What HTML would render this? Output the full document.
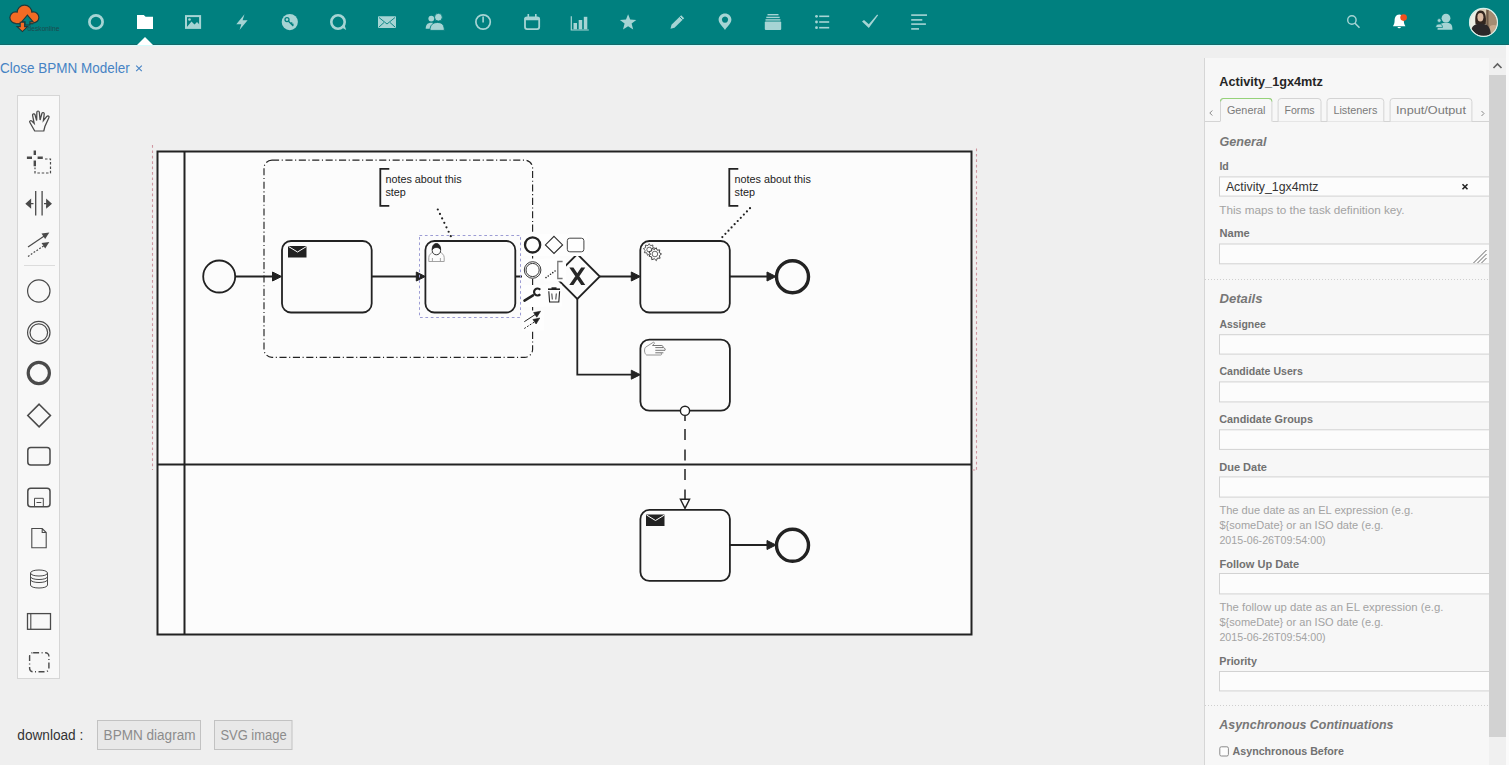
<!DOCTYPE html>
<html><head><meta charset="utf-8">
<style>
html,body{margin:0;padding:0;}
body{width:1509px;height:765px;overflow:hidden;position:relative;background:#efefef;font-family:"Liberation Sans",sans-serif;}
.abs{position:absolute;}
#hdr{left:0;top:0;width:1509px;height:44px;background:#00807f;border-bottom:1px solid #136a6b;box-shadow:0 1px 0 #d4fcfc;}
#close{left:0;top:59px;font-size:13.5px;color:#337ab7;white-space:nowrap;line-height:18px;}
#palette{left:17px;top:95px;width:41px;height:582px;background:#f8f8f8;border:1px solid #d6d6d6;}
#panel{left:1204px;top:58px;width:284px;height:707px;background:#f7f7f7;border-left:1px solid #d9d9d9;overflow:hidden;}
#sb{left:1489px;top:58px;width:17px;height:707px;background:#f0f0f0;}
#thumb{left:1489px;top:75px;width:17px;height:662px;background:#d2d2d2;}
.lbl{position:absolute;left:14px;font-size:11px;font-weight:bold;color:#666;white-space:nowrap;}
.inp{position:absolute;left:14px;width:290px;height:19px;background:#fcfcfc;border:1px solid #cfcfcf;}
.help{position:absolute;left:14px;font-size:10.5px;color:#999;white-space:nowrap;line-height:15px;}
.grp{position:absolute;left:14px;font-size:13px;font-weight:bold;font-style:italic;color:#777;white-space:nowrap;}
.tab{position:absolute;top:40px;height:22px;border:1px solid #d4d4d4;border-bottom:none;border-radius:3px 3px 0 0;background:#f7f7f7;font-size:11.5px;color:#777;line-height:22px;text-align:center;box-sizing:border-box;}
#dl{left:17px;top:726px;font-size:14px;color:#333;}
.btn{position:absolute;top:720px;height:29px;box-sizing:border-box;border:1px solid #c4c4c4;background:#e7e7e7;color:#8a8a8a;font-size:13.5px;line-height:27px;text-align:center;white-space:nowrap;}
</style></head>
<body>
<div id="hdr" class="abs"></div>
<svg class="abs" style="left:0;top:0" width="1509" height="45">
<g>
 <!-- logo -->
 <g fill="#1c3a3c"><circle cx="24.5" cy="12.6" r="8"/><circle cx="15.6" cy="17.6" r="6.3"/><circle cx="33.3" cy="17.4" r="6.1"/><rect x="15.6" y="14" width="17.7" height="10.3"/></g>
 <g fill="#f26b24"><circle cx="24.5" cy="12.6" r="6.8"/><circle cx="15.6" cy="17.6" r="5.1"/><circle cx="33.3" cy="17.4" r="4.9"/><rect x="15.6" y="14" width="17.7" height="9.1"/></g>
 <path d="M27.4 15.2 L21.6 21.9 H25 V25 H29.9 V21.9 H33.2 Z" fill="#00807f" stroke="#1c3a3c" stroke-width="1.1"/>
 <path d="M20.2 22.3 V26.6 H17 L22.4 31.6 L27.6 26.6 H24.6 V22.3 Z" fill="#f26b24" stroke="#1c3a3c" stroke-width="1.1"/>
 <text x="27.6" y="31.2" font-family="Liberation Sans" font-size="6.8" fill="#1d4a4e" textLength="31.8" lengthAdjust="spacingAndGlyphs">deskonline</text>
</g>
<g fill="#a6d4d4" stroke="none">
 <!-- circle -->
 <circle cx="96" cy="21.9" r="6.6" fill="none" stroke="#a6d4d4" stroke-width="2.7"/>
 <!-- folder (white) -->
 <path d="M137 15.1 H143.8 L145.6 16.8 H153 V28.9 H137 Z" fill="#fff"/>
 <path d="M137 45 L145 37 L153 45 Z" fill="#fff"/>
 <!-- image -->
 <rect x="186" y="16.1" width="14.1" height="11.8" fill="none" stroke="#a6d4d4" stroke-width="2"/>
 <circle cx="189.5" cy="19.5" r="1.3"/>
 <path d="M186.5 27.5 L191.5 21.5 L194.5 24.5 L197 22 L200 25 V27.5 Z"/>
 <!-- lightning -->
 <path d="M244.5 14.3 L236.3 24.2 H241.3 L239.5 30 L247.6 20.2 H242.6 Z"/>
 <!-- key circle -->
 <circle cx="289.8" cy="22.1" r="8.1"/>
 <g fill="none" stroke="#00807f" stroke-width="1.3"><circle cx="287" cy="19.6" r="2"/><path d="M288.5 21.2 L293.3 26 M291 23.7 L292.2 22.6 M292.2 24.9 L293.4 23.8"/></g>
 <!-- chat -->
 <circle cx="338" cy="22" r="6.7" fill="none" stroke="#a6d4d4" stroke-width="2.6"/>
 <path d="M341 27 L346.2 30 L344.5 25 Z"/>
 <!-- mail -->
 <rect x="378" y="16.3" width="18" height="11.6" rx="0.8"/>
 <path d="M379 17.5 L387 24 L395 17.5 M379 27 L384 22.5 M395 27 L390 22.5" fill="none" stroke="#00807f" stroke-width="0.9"/>
 <!-- users -->
 <circle cx="431.3" cy="18.6" r="2.9"/>
 <path d="M425.7 28.8 C425.7 24.8 427.6 22.8 431.3 22.8 C435 22.8 436.5 24.8 436.5 28.8 Z"/>
 <circle cx="438.4" cy="17.2" r="3.9" stroke="#00807f" stroke-width="0.9"/>
 <path d="M430 30.4 C430 25.2 432.6 22.5 437.5 22.5 C442.4 22.5 444.3 25.2 444.3 30.4 Z" stroke="#00807f" stroke-width="0.9"/>
 <!-- clock -->
 <circle cx="483.1" cy="22" r="7.2" fill="none" stroke="#a6d4d4" stroke-width="1.7"/>
 <rect x="482.3" y="16.5" width="1.6" height="6"/>
 <!-- calendar -->
 <rect x="525" y="17.3" width="14.2" height="11.8" rx="2" fill="none" stroke="#a6d4d4" stroke-width="1.8"/>
 <rect x="524.5" y="17" width="15.2" height="3.2" rx="1.5"/>
 <rect x="527.5" y="14" width="1.6" height="4.5"/>
 <rect x="535" y="14" width="1.6" height="4.5"/>
 <!-- chart -->
 <path d="M571.3 16.3 V30 H588.8" fill="none" stroke="#a6d4d4" stroke-width="1.2"/>
 <rect x="573.5" y="23" width="3.5" height="6.3"/>
 <rect x="578.7" y="20" width="3.5" height="9.3"/>
 <rect x="583.8" y="16.8" width="3.5" height="12.5"/>
 <!-- star -->
 <path d="M628.1 14.3 L630.2 19.6 L636.3 19.9 L631.6 23.6 L633.2 29.6 L628.1 26.3 L623 29.6 L624.6 23.6 L619.9 19.9 L626 19.6 Z"/>
 <!-- pencil -->
 <path d="M681.2 15.2 L684.2 18.2 L674.5 27.8 L670.5 28.7 L671.5 24.8 Z"/>
 <path d="M679.8 16.8 L682.7 19.7" stroke="#00807f" stroke-width="0.9"/>
 <!-- pin -->
 <path d="M725 13.4 C721.5 13.4 718.6 16 718.6 19.6 C718.6 23.5 722.5 26.5 725 30 C727.5 26.5 731.4 23.5 731.4 19.6 C731.4 16 728.5 13.4 725 13.4 Z M725 16.5 A3.1 3.1 0 1 0 725.01 16.5 Z" fill-rule="evenodd"/>
 <!-- stack -->
 <rect x="767.5" y="14" width="11" height="1.4"/>
 <rect x="766.3" y="16.7" width="13.4" height="1.4"/>
 <rect x="765.5" y="19.2" width="15" height="1.4"/>
 <rect x="764.8" y="21.5" width="16.4" height="8.5" rx="1"/>
 <!-- list -->
 <circle cx="816.5" cy="16.3" r="1.4"/><circle cx="816.5" cy="22" r="1.4"/><circle cx="816.5" cy="27.7" r="1.4"/>
 <rect x="819.2" y="15.5" width="10" height="1.6"/><rect x="819.2" y="21.2" width="10" height="1.6"/><rect x="819.2" y="26.9" width="10" height="1.6"/>
 <!-- check -->
 <path d="M862 21.4 L864 20 L868.8 24.3 L877.2 14.5 L878.1 15.3 L868.8 27.9 Z"/>
 <!-- lines -->
 <rect x="911.2" y="14.3" width="15.8" height="1.6"/>
 <rect x="911.2" y="19.1" width="11.1" height="1.6"/>
 <rect x="911.2" y="23.3" width="14.7" height="1.6"/>
 <rect x="911.2" y="28.1" width="7.8" height="1.6"/>
 <!-- search -->
 <circle cx="1351.9" cy="20" r="4.2" fill="none" stroke="#a6d4d4" stroke-width="1.4"/>
 <path d="M1354.8 23 L1359.5 27.7" stroke="#a6d4d4" stroke-width="1.6"/>
 <!-- bell -->
 <path d="M1399.2 14.5 C1395.8 14.5 1394.6 17.5 1394.6 21 C1394.6 24 1393.2 25.5 1393 26.2 H1405.4 C1405.2 25.5 1403.8 24 1403.8 21 C1403.8 17.5 1402.6 14.5 1399.2 14.5 Z M1397.4 27 A1.9 1.9 0 0 0 1401 27 Z" fill="#fff"/>
 <circle cx="1403.6" cy="17.6" r="3.3" fill="#f0501e"/>
 <!-- user -->
 <circle cx="1446" cy="18.2" r="4.4"/>
 <path d="M1437.5 29.8 C1437.5 24.8 1440.5 22.8 1446 22.8 C1451.5 22.8 1452.4 25 1452.4 29.8 Z"/>
 <circle cx="1439.2" cy="20.5" r="1.9" stroke="#00807f" stroke-width="0.7"/>
 <path d="M1435.7 27.5 C1435.7 25 1437 24 1439.2 24 C1441.4 24 1442.5 25 1442.5 27.5 Z" stroke="#00807f" stroke-width="0.7"/>
 <!-- avatar -->
 <circle cx="1483.5" cy="22.5" r="14.3" fill="#efe9de"/>
 <clipPath id="av"><circle cx="1483.5" cy="22.5" r="13.5"/></clipPath>
 <g clip-path="url(#av)">
  <rect x="1469" y="8" width="30" height="30" fill="#d9cdb6"/>
  <rect x="1469" y="8" width="10" height="30" fill="#eceee4"/>
  <rect x="1486" y="8" width="13" height="30" fill="#a48c72"/>
  <rect x="1486.5" y="8" width="2" height="20" fill="#6f5a48"/>
  <path d="M1490 26 C1493 24 1497 25 1498 27 V38 H1489 Z" fill="#c7aa8e"/>
  <path d="M1475.5 24 C1474.5 16 1476 10.5 1480.5 10.5 C1485 10.5 1486.5 15 1485.8 24 Z" fill="#33261f"/>
  <ellipse cx="1480.4" cy="17.3" rx="3" ry="4.2" fill="#dcbca4"/>
  <path d="M1470 38 C1470 28 1473 23.5 1480.5 23.5 C1488 23.5 1491 27 1491 38 Z" fill="#2b2729"/>
 </g>
 <circle cx="1483.5" cy="22.4" r="14" fill="none" stroke="#d6efea" stroke-width="1.1"/>
</g>
</svg>
<svg class="abs" style="left:0;top:50px" width="160" height="30"><text x="0" y="22.9" font-family="Liberation Sans" font-size="13.8" fill="#4683c4" textLength="129.7" lengthAdjust="spacingAndGlyphs">Close BPMN Modeler</text><path d="M136.2 15.6 L141.8 21.2 M141.8 15.6 L136.2 21.2" stroke="#4683c4" stroke-width="1.1"/></svg>
<div id="palette" class="abs"></div>
<svg class="abs" style="left:0;top:0" width="70" height="700">
<g fill="none" stroke="#4a4a4a" stroke-width="1.2">
 <!-- hand -->
 <path transform="translate(39,121) scale(1.07,1) translate(-37.5,-121)" d="M33.5 131 L29 122.5 C28.2 121.2 29.6 120 30.8 121 L33 123.3 L31.5 115.3 C31.2 113.8 33.3 113.3 33.8 114.8 L35.3 120.6 L35.5 112.2 C35.5 110.6 37.7 110.6 37.8 112.2 L38.5 120 L40.2 113.5 C40.6 112 42.6 112.3 42.4 113.9 L41.6 120.6 L44.8 116.5 C45.8 115.3 47.4 116.3 46.8 117.6 L43 126.5 L42 131 Z"/>
 <!-- lasso -->
 <path d="M34.8 150.5 V155 M34.8 160.5 V166.3 M26.9 157.8 H32 M37.6 157.8 H42.8" stroke-width="2.4"/>
 <path d="M45 159 H50.5 V173 H35 V167.5" stroke-width="1.2" stroke-dasharray="2.5,1.8"/>
 <!-- space -->
 <path d="M35.7 191 V215.6 M42.1 191 V215.6" stroke-width="1.3"/>
 <path d="M26.3 203.7 L30.5 200 V207.4 Z M51 203.7 L46.8 200 V207.4 Z M30 203.7 H33.5 M47.3 203.7 H44" fill="#4a4a4a" stroke-width="1.3"/>
 <!-- global connect -->
 <path d="M28 247 L45 235.5" stroke-width="1.2"/>
 <path d="M49.3 232.6 L41.5 233.5 L45.2 239 Z" fill="#4a4a4a" stroke="none"/>
 <path d="M28 256.4 L45 245" stroke-width="1.2" stroke-dasharray="1.8,1.6"/>
 <path d="M49.3 242 L41.5 242.9 L45.2 248.4 Z" fill="#4a4a4a" stroke="none"/>
 <path d="M24 265.5 H55" stroke="#dcdcdc" stroke-width="1"/>
 <!-- events -->
 <circle cx="38.8" cy="291" r="11.2" stroke-width="1.2"/>
 <circle cx="38.8" cy="332.6" r="11.2" stroke-width="1.2"/>
 <circle cx="38.8" cy="332.6" r="8.8" stroke-width="1.2"/>
 <circle cx="38.8" cy="373" r="10.6" stroke-width="3.2"/>
 <!-- gateway -->
 <path d="M39.1 404.2 L50.4 415.5 L39.1 426.8 L27.8 415.5 Z" stroke-width="1.6"/>
 <!-- task -->
 <rect x="27.8" y="447.6" width="22.2" height="17.5" rx="3" stroke-width="1.5"/>
 <!-- subprocess -->
 <rect x="27.8" y="488.3" width="22.2" height="18.4" rx="3" stroke-width="1.5"/>
 <path d="M34.5 506.7 V498.3 H43.3 V506.7 M36.5 502.5 H41.3" stroke-width="1"/>
 <!-- data object -->
 <path d="M31.8 528.5 H42.2 L46.2 532.5 V547.7 H31.8 Z M42.2 528.5 V532.5 H46.2" stroke-width="1.1"/>
 <!-- data store -->
 <path d="M30.5 573 V585 C30.5 589 47.5 589 47.5 585 V573 M30.5 573 C30.5 569 47.5 569 47.5 573 C47.5 577 30.5 577 30.5 573 M30.5 576.5 C30.5 580.5 47.5 580.5 47.5 576.5 M30.5 579.5 C30.5 583.5 47.5 583.5 47.5 579.5" stroke-width="1"/>
 <!-- participant -->
 <rect x="27.5" y="613.6" width="23" height="15.7" stroke-width="1.3"/>
 <path d="M30.8 613.6 V629.3" stroke-width="1.1"/>
 <!-- group -->
 <rect x="29.6" y="652.7" width="19.3" height="19.1" rx="3.5" stroke-width="1.4" stroke-dasharray="6,2.5,1,2.5"/>
</g>
</svg>
<svg class="abs" style="left:0;top:0" width="1509" height="765" id="canvas">
<g fill="none" stroke="#222" stroke-width="1.8">
 <rect x="157.5" y="151.5" width="814" height="483" fill="#fcfcfc" stroke-width="2"/>
 <line x1="184.5" y1="151.5" x2="184.5" y2="634.5" stroke-width="2"/>
 <line x1="157.5" y1="464.5" x2="971.5" y2="464.5" stroke-width="2"/>
 <path d="M152.5 145 V470 M976.5 148.5 V470 M972.5 470 H976.5" stroke="#cf96a0" stroke-width="1.1" stroke-dasharray="2.7,2.7"/>
 <rect x="264" y="160.1" width="268.6" height="197.2" rx="8" ry="8" stroke-width="1.15" stroke-dasharray="7.1,2.6,1.1,2.6"/>
 <circle cx="219.2" cy="276.5" r="16"/>
 <path d="M235 276.5 H274"/>
 <path d="M272.5 272 L281.5 276.5 L272.5 281 Z" fill="#222" stroke-width="1"/>
 <rect x="282" y="241" width="89.7" height="71.5" rx="9" ry="9"/>
 <path d="M371.7 276.5 H417"/>
 <path d="M416.3 272 L425.3 276.5 L416.3 281 Z" fill="#222" stroke-width="1"/>
 <rect x="425.4" y="241" width="89.9" height="71.5" rx="9" ry="9"/>
 <path d="M515.3 276.5 H555"/>
 <rect x="419.5" y="235.5" width="101" height="82" stroke="#9c9cd4" stroke-width="1" stroke-dasharray="2.7,2.7"/>
 <path d="M577.3 254 L599.8 276.5 L577.3 299 L554.8 276.5 Z"/>
 <path d="M569.3 267.6 H573.4 L585.3 284.9 H581.2 Z M581.2 267.6 H585.3 L573.4 284.9 H569.3 Z" fill="#262626" stroke="none"/>
 <path d="M599.8 276.5 H632"/>
 <path d="M631.3 272 L640.3 276.5 L631.3 281 Z" fill="#222" stroke-width="1"/>
 <rect x="640.3" y="241" width="89.5" height="71.5" rx="9" ry="9"/>
 <path d="M729.8 276.5 H768"/>
 <path d="M767 272 L776 276.5 L767 281 Z" fill="#222" stroke-width="1"/>
 <circle cx="792.5" cy="276.7" r="16" stroke-width="3.4"/>
 <path d="M577.3 299 V374.7 H632"/>
 <path d="M631.3 370.2 L640.3 374.7 L631.3 379.2 Z" fill="#222" stroke-width="1"/>
 <rect x="640.4" y="339.6" width="89.5" height="71.1" rx="9" ry="9"/>
 <path d="M685 415.5 V421 M685 429 V440 M685 449.4 V460.4 M685 469 V480 M685 489.4 V499.5" stroke-width="1.5"/>
 <circle cx="685" cy="410.8" r="4.6" fill="#fff" stroke-width="1.4"/>
 <path d="M680.4 499.2 L689.6 499.2 L685 508.4 Z" fill="#fff" stroke-width="1.4"/>
 <rect x="640.4" y="509.9" width="89.5" height="71" rx="9" ry="9"/>
 <path d="M729.9 545 H768"/>
 <path d="M767 540.5 L776 545 L767 549.5 Z" fill="#222" stroke-width="1"/>
 <circle cx="792.5" cy="545.3" r="16" stroke-width="3.4"/>
 <path d="M389.3 168.9 h-9 v37 h9" stroke-width="1.8"/>
 <path d="M738.3 168.8 h-9 v37 h9" stroke-width="1.8"/>
 <path d="M437.8 209.5 L451 236.6" stroke-width="2.2" stroke-dasharray="0,4.95" stroke-linecap="round"/>
 <path d="M750 208.2 L722.1 237.3" stroke-width="2.2" stroke-dasharray="0,4.44" stroke-linecap="round"/>
</g>
<g font-family="Liberation Sans" font-size="10.8" fill="#222">
 <text x="385.4" y="183.3">notes about this</text>
 <text x="385.4" y="195.8">step</text>
 <text x="734.6" y="182.6">notes about this</text>
 <text x="734.6" y="195.8">step</text>
</g>
<!-- task icons -->
<g>
 <path d="M288 246 h18.5 v11.5 h-18.5 z" fill="#222"/>
 <path d="M288.5 246.5 l9 5.5 l9 -5.5" fill="none" stroke="#fff" stroke-width="1"/>
 <path d="M646 514.5 h18.5 v11.5 h-18.5 z" fill="#222"/>
 <path d="M646.5 515 l9 5.5 l9 -5.5" fill="none" stroke="#fff" stroke-width="1"/>
</g>
<g fill="none" stroke="#222" stroke-width="0.9">
 <!-- user icon -->
 <path d="M428.8 261.5 v-4 c0-2.5 2-4.5 4.5-5.3 M444.2 261.5 v-4 c0-2.5 -2-4.5 -4.5-5.3 M428.8 261.5 h15.4" stroke="#999"/>
 <circle cx="436.4" cy="250.6" r="4.2" fill="#fcfcfc"/>
 <path d="M432.2 249.5 c0-4 2-6 4.2-6 c2.2 0 4.2 2 4.2 6 c-1-1.5 -2.5-2 -4.2-2 c-1.7 0 -3.2 0.5 -4.2 2 z" fill="#222"/>
 <path d="M432.4 261.5 v-3.5 M440.4 261.5 v-3.5" stroke="#999"/>
</g>
<g fill="none" stroke="#3a3a3a" stroke-width="0.75">
 <!-- gears -->
 <path d="M0,-5.5 L1.2,-3.6 L3.4,-4.3 L3.3,-2 L5.5,-1.2 L4,0.6 L5.1,2.6 L2.8,3 L2.4,5.3 L0.4,4.1 L-1.6,5.3 L-2.2,3 L-4.5,2.9 L-3.7,0.8 L-5.4,-0.9 L-3.3,-1.9 L-3.5,-4.2 L-1.2,-3.7 Z" transform="translate(649.2,249.6) scale(1.08)"/>
 <circle cx="649.2" cy="249.6" r="2.4"/>
 <path d="M0,-5.5 L1.2,-3.6 L3.4,-4.3 L3.3,-2 L5.5,-1.2 L4,0.6 L5.1,2.6 L2.8,3 L2.4,5.3 L0.4,4.1 L-1.6,5.3 L-2.2,3 L-4.5,2.9 L-3.7,0.8 L-5.4,-0.9 L-3.3,-1.9 L-3.5,-4.2 L-1.2,-3.7 Z" transform="translate(654.9,254) rotate(12) scale(1.17)" fill="#fcfcfc"/>
 <circle cx="654.9" cy="254" r="2.8"/>
</g>
<g fill="none" stroke-width="0.9">
 <!-- hand -->
 <path d="M652.5 345.5 L654.5 343.3 L653.7 342 L645.6 347.2 C644.1 348.4 644 353.6 646.6 355 H660.8 C661.9 355 661.9 353.2 660.8 353.2" stroke="#8a8a8a"/>
 <path d="M652.5 345.5 H661.8 C663 345.5 663.4 347.3 662.5 347.4 M655.3 347.6 H663.6 M655.3 350.3 H665 M655.3 352.8 H663.4 M663.6 347.6 C665 348 665.6 350 665 350.3" stroke="#666"/>
</g>
<!-- context pad -->
<g fill="#fefefe" stroke="none">
 <rect x="522" y="234" width="22" height="22"/>
 <rect x="543.5" y="234" width="22" height="22"/>
 <rect x="565" y="234" width="22" height="22"/>
 <rect x="522" y="259" width="22" height="20"/>
 <rect x="544" y="258.5" width="22" height="23"/>
 <rect x="522" y="285" width="22" height="22"/>
 <rect x="543.5" y="284.5" width="18.5" height="22"/>
 <rect x="522" y="310.5" width="22" height="20"/>
</g>
<g fill="none" stroke="#222">
 <circle cx="532.6" cy="244.9" r="7.6" stroke-width="2.3"/>
 <path d="M554 236.3 L562.6 244.9 L554 253.5 L545.4 244.9 Z" stroke-width="1.1" stroke="#2a2a2a"/>
 <rect x="567.3" y="238.2" width="16.6" height="13.6" rx="2.5" stroke-width="1" stroke="#444"/>
 <circle cx="532.6" cy="270" r="8.3" stroke-width="0.9"/>
 <circle cx="532.6" cy="270" r="6.6" stroke-width="0.9"/>
 <path d="M562.6 261.5 h-4.8 v17 h4.8" stroke-width="1.3" stroke="#777"/>
 <path d="M546 277.6 L557 269.6" stroke-width="1.6" stroke-dasharray="0,2.8" stroke-linecap="round"/>
 <path d="M524.5 300.6 L533 295.3" stroke-width="2.6" stroke-linecap="round"/>
 <path d="M540.2 289.7 A3.5 3.5 0 1 0 540.2 294.3" stroke-width="2.2"/>
 <path d="M548 289.2 h12" stroke-width="1.6"/>
 <path d="M551.5 288.3 h5" stroke-width="2"/>
 <path d="M548.8 291.2 L549.6 302 h9.2 L559.6 291.2" stroke-width="1.1"/>
 <path d="M551.8 293.5 L552.3 299.5 M556.3 293.5 L555.8 299.5" stroke-width="0.9"/>
 <path d="M524.3 321.7 L536 314" stroke-width="1"/>
 <path d="M540.6 311.2 L533.6 312.6 L536.8 317.2 Z" fill="#222" stroke-width="0.6"/>
 <path d="M524.3 328.5 L536 321" stroke-width="1" stroke-dasharray="1.8,1.5"/>
 <path d="M539.8 318 L532.9 319.5 L536.1 324 Z" fill="#222" stroke-width="0.6"/>
</g>
</svg>
<svg class="abs" style="left:0;top:0" width="1489" height="765" id="psvg">
<style>.pl{font:bold 10.6px "Liberation Sans";fill:#717171}.ph{font:10.9px "Liberation Sans";fill:#a3a3a3}.pg{font:italic bold 13px "Liberation Sans";fill:#777}.pt{font:bold 13.2px "Liberation Sans";fill:#262626}.pv{font:12px "Liberation Sans";fill:#333}.ptab{font:11px "Liberation Sans";fill:#7a7a7a}</style>
<rect x="1204" y="58" width="285" height="707" fill="#f7f7f7"/>
<path d="M1204.5 58 V765" stroke="#d6d6d6" stroke-width="1"/>
<text x="1219.3" y="85.7" class="pt" textLength="103.6" lengthAdjust="spacingAndGlyphs">Activity_1gx4mtz</text>
<path d="M1205 121.5 H1220 M1272.4 121.5 H1489" stroke="#d4d4d4" stroke-width="1"/>
<path d="M1220.5 121.5 V101.5 Q1220.5 98.5 1223.5 98.5 H1268.9 Q1271.9 98.5 1271.9 101.5 V121.5" fill="#f7f7f7" stroke="#d4d4d4" stroke-width="1"/>
<text x="1246.2" y="113.6" class="ptab" text-anchor="middle" textLength="38.5" lengthAdjust="spacingAndGlyphs">General</text>
<path d="M1278.1 121.5 V101.5 Q1278.1 98.5 1281.1 98.5 H1318.0 Q1321.0 98.5 1321.0 101.5 V121.5" fill="#f7f7f7" stroke="#d4d4d4" stroke-width="1"/>
<text x="1299.5" y="113.6" class="ptab" text-anchor="middle" textLength="30" lengthAdjust="spacingAndGlyphs">Forms</text>
<path d="M1327.0 121.5 V101.5 Q1327.0 98.5 1330.0 98.5 H1380.8 Q1383.8 98.5 1383.8 101.5 V121.5" fill="#f7f7f7" stroke="#d4d4d4" stroke-width="1"/>
<text x="1355.4" y="113.6" class="ptab" text-anchor="middle" textLength="44" lengthAdjust="spacingAndGlyphs">Listeners</text>
<path d="M1390.1 121.5 V101.5 Q1390.1 98.5 1393.1 98.5 H1468.9 Q1471.9 98.5 1471.9 101.5 V121.5" fill="#f7f7f7" stroke="#d4d4d4" stroke-width="1"/>
<text x="1431.0" y="113.6" class="ptab" text-anchor="middle" textLength="69.9" lengthAdjust="spacingAndGlyphs">Input/Output</text>
<path d="M1220.5 101.5 Q1220.5 98.5 1223.5 98.5 H1268.9 Q1271.9 98.5 1271.9 101.5" fill="none" stroke="#96d27a" stroke-width="1.1"/>
<path d="M1212.3 110.5 L1209.8 113 L1212.3 115.5" fill="none" stroke="#888" stroke-width="1"/>
<path d="M1481.5 111 L1484 113.5 L1481.5 116" fill="none" stroke="#888" stroke-width="1"/>
<text x="1219.5" y="145.6" class="pg" textLength="47" lengthAdjust="spacingAndGlyphs">General</text>
<text x="1219.4" y="169.7" class="pl">Id</text>
<rect x="1219.5" y="176.9" width="300" height="19.2" fill="#fcfcfc" stroke="#d2d2d2" stroke-width="1"/>
<text x="1225.9" y="190.5" class="pv" textLength="92.6" lengthAdjust="spacingAndGlyphs">Activity_1gx4mtz</text>
<path d="M1462.5 184.3 L1467.5 189.3 M1467.5 184.3 L1462.5 189.3" stroke="#222" stroke-width="1.6"/>
<text x="1219.3" y="214" class="ph" textLength="185.3" lengthAdjust="spacingAndGlyphs">This maps to the task definition key.</text>
<text x="1219.5" y="236.8" class="pl" textLength="30.3" lengthAdjust="spacingAndGlyphs">Name</text>
<rect x="1219.5" y="244.0" width="300" height="19.8" fill="#fcfcfc" stroke="#d2d2d2" stroke-width="1"/>
<path d="M1473.5 263 L1486.5 250 M1477.5 263 L1486.5 254 M1481.5 263 L1486.5 258" stroke="#555" stroke-width="0.9"/>
<path d="M1205 279.5 H1489" stroke="#cfcfcf" stroke-width="1" stroke-dasharray="1,2"/>
<text x="1219.5" y="302.7" class="pg" textLength="43" lengthAdjust="spacingAndGlyphs">Details</text>
<text x="1219.4" y="327.9" class="pl" textLength="46.5" lengthAdjust="spacingAndGlyphs">Assignee</text>
<rect x="1219.5" y="334.7" width="300" height="19.4" fill="#fcfcfc" stroke="#d2d2d2" stroke-width="1"/>
<text x="1219.4" y="374.7" class="pl" textLength="83.4" lengthAdjust="spacingAndGlyphs">Candidate Users</text>
<rect x="1219.5" y="381.9" width="300" height="20.0" fill="#fcfcfc" stroke="#d2d2d2" stroke-width="1"/>
<text x="1219.2" y="422.6" class="pl" textLength="93.8" lengthAdjust="spacingAndGlyphs">Candidate Groups</text>
<rect x="1219.5" y="429.8" width="300" height="19.6" fill="#fcfcfc" stroke="#d2d2d2" stroke-width="1"/>
<text x="1219.2" y="470.7" class="pl" textLength="47.8" lengthAdjust="spacingAndGlyphs">Due Date</text>
<rect x="1219.5" y="476.9" width="300" height="20.2" fill="#fcfcfc" stroke="#d2d2d2" stroke-width="1"/>
<text x="1219.4" y="514.1" class="ph" textLength="194" lengthAdjust="spacingAndGlyphs">The due date as an EL expression (e.g.</text>
<text x="1219.4" y="529.3" class="ph" textLength="164" lengthAdjust="spacingAndGlyphs">${someDate} or an ISO date (e.g.</text>
<text x="1219.4" y="543.8" class="ph" textLength="106.3" lengthAdjust="spacingAndGlyphs">2015-06-26T09:54:00)</text>
<text x="1219.4" y="567.8" class="pl" textLength="79.8" lengthAdjust="spacingAndGlyphs">Follow Up Date</text>
<rect x="1219.5" y="573.5" width="300" height="20.4" fill="#fcfcfc" stroke="#d2d2d2" stroke-width="1"/>
<text x="1219.4" y="611.2" class="ph" textLength="224" lengthAdjust="spacingAndGlyphs">The follow up date as an EL expression (e.g.</text>
<text x="1219.4" y="626.4" class="ph" textLength="164" lengthAdjust="spacingAndGlyphs">${someDate} or an ISO date (e.g.</text>
<text x="1219.4" y="640.9" class="ph" textLength="106.3" lengthAdjust="spacingAndGlyphs">2015-06-26T09:54:00)</text>
<text x="1219.3" y="665" class="pl" textLength="37.6" lengthAdjust="spacingAndGlyphs">Priority</text>
<rect x="1219.5" y="671.5" width="300" height="19.4" fill="#fcfcfc" stroke="#d2d2d2" stroke-width="1"/>
<path d="M1205 705.5 H1489" stroke="#cfcfcf" stroke-width="1" stroke-dasharray="1,2"/>
<text x="1219.3" y="729.4" class="pg" textLength="174.2" lengthAdjust="spacingAndGlyphs">Asynchronous Continuations</text>
<rect x="1219.8" y="746.8" width="8.6" height="9.2" rx="1.5" fill="#fdfdfd" stroke="#8a8a8a" stroke-width="1"/>
<text x="1232.6" y="754.8" class="pl" textLength="111.3" lengthAdjust="spacingAndGlyphs">Asynchronous Before</text>
</svg>
<div id="sb" class="abs"></div>
<div id="thumb" class="abs"></div>
<div class="abs" style="left:1506px;top:45px;width:3px;height:720px;background:#fbfbfb"></div>
<svg class="abs" style="left:1489px;top:58px" width="17" height="17"><path d="M4.5 10 L8.5 6 L12.5 10" fill="none" stroke="#606060" stroke-width="1.6"/></svg>
<svg class="abs" style="left:0;top:700px" width="320" height="65">
<rect x="97.5" y="20.5" width="103" height="29" fill="#e8e8e8" stroke="#c2c2c2" stroke-width="1"/>
<rect x="214.5" y="20.5" width="77.5" height="29" fill="#e8e8e8" stroke="#c2c2c2" stroke-width="1"/>
<text x="17.3" y="40" font-family="Liberation Sans" font-size="14" fill="#333" textLength="66" lengthAdjust="spacingAndGlyphs">download :</text>
<text x="103.6" y="40" font-family="Liberation Sans" font-size="14" fill="#8c8c8c" textLength="91.9" lengthAdjust="spacingAndGlyphs">BPMN diagram</text>
<text x="220.4" y="40" font-family="Liberation Sans" font-size="14" fill="#8c8c8c" textLength="66.3" lengthAdjust="spacingAndGlyphs">SVG image</text>
</svg>
</body></html>
